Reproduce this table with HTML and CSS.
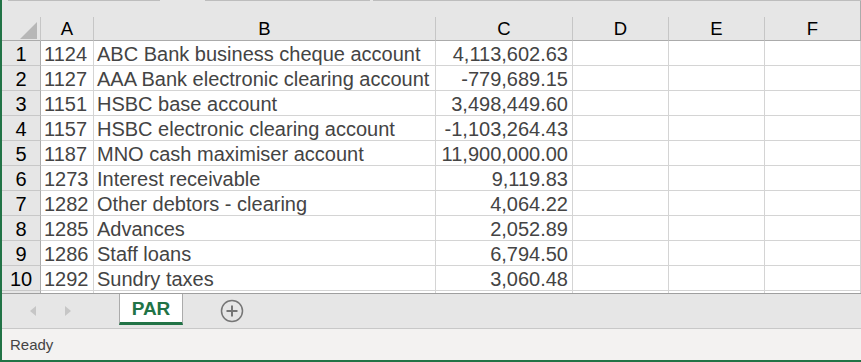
FILE: index.html
```html
<!DOCTYPE html>
<html lang="en">
<head>
  <meta charset="UTF-8" />
  <title>PAR</title>
  <link rel="stylesheet" href="styles.css">
</head>
<body>

<div class="window">
  <div class="topline"></div>

  <div class="grid">
    <table class="sheet">
      <colgroup>
        <col class="c-rowhead">
        <col class="c-a">
        <col class="c-b">
        <col class="c-c">
        <col class="c-d">
        <col class="c-e">
        <col class="c-f">
      </colgroup>
      <thead>
        <tr>
          <th class="corner">
            <svg width="17" height="17" viewBox="0 0 17 17"><polygon points="0,17 17,17 17,0" fill="#b7b7b7"/></svg>
          </th>
          <th>A</th>
          <th>B</th>
          <th>C</th>
          <th>D</th>
          <th>E</th>
          <th class="last">F</th>
        </tr>
      </thead>
      <tbody>
        <tr><td class="rownum">1</td><td>1124</td><td>ABC Bank business cheque account</td><td class="num">4,113,602.63</td><td></td><td></td><td></td></tr>
        <tr><td class="rownum">2</td><td>1127</td><td>AAA Bank electronic clearing account</td><td class="num">-779,689.15</td><td></td><td></td><td></td></tr>
        <tr><td class="rownum">3</td><td>1151</td><td>HSBC base account</td><td class="num">3,498,449.60</td><td></td><td></td><td></td></tr>
        <tr><td class="rownum">4</td><td>1157</td><td>HSBC electronic clearing account</td><td class="num">-1,103,264.43</td><td></td><td></td><td></td></tr>
        <tr><td class="rownum">5</td><td>1187</td><td>MNO cash maximiser account</td><td class="num">11,900,000.00</td><td></td><td></td><td></td></tr>
        <tr><td class="rownum">6</td><td>1273</td><td>Interest receivable</td><td class="num">9,119.83</td><td></td><td></td><td></td></tr>
        <tr><td class="rownum">7</td><td>1282</td><td>Other debtors - clearing</td><td class="num">4,064.22</td><td></td><td></td><td></td></tr>
        <tr><td class="rownum">8</td><td>1285</td><td>Advances</td><td class="num">2,052.89</td><td></td><td></td><td></td></tr>
        <tr><td class="rownum">9</td><td>1286</td><td>Staff loans</td><td class="num">6,794.50</td><td></td><td></td><td></td></tr>
        <tr><td class="rownum">10</td><td>1292</td><td>Sundry taxes</td><td class="num">3,060.48</td><td></td><td></td><td></td></tr>
        <tr><td class="rownum"></td><td></td><td></td><td class="num"></td><td></td><td></td><td></td></tr>
      </tbody>
    </table>
  </div>

  <div class="tabbar">
    <div class="tabnav">
      <svg width="6" height="10" viewBox="0 0 6 10"><polygon points="6,0 6,10 0,5" fill="#c6c6c6"/></svg>
      <svg width="6" height="10" viewBox="0 0 6 10"><polygon points="0,0 0,10 6,5" fill="#c6c6c6"/></svg>
    </div>
    <div class="tab">PAR</div>
    <div class="addsheet">
      <svg width="24" height="24" viewBox="0 0 24 24">
        <circle cx="12" cy="12" r="10.5" fill="none" stroke="#767676" stroke-width="1.5"/>
        <path d="M12 6.5v11M6.5 12h11" stroke="#767676" stroke-width="2"/>
      </svg>
    </div>
  </div>

  <div class="statusbar">Ready</div>
</div>

</body>
</html>
```

FILE: styles.css
```css
body {
  margin: 0;
  font-family: 'Liberation Sans', Arial, sans-serif;
  background: #fff;
}

.window {
  width: 861px;
  height: 362px;
  box-sizing: border-box;
  border-left: 2px solid #217346;
  border-bottom: 2px solid #217346;
  display: flex;
  flex-direction: column;
  overflow: hidden;
}

.topline {
  height: 1px;
  flex: none;
  background: linear-gradient(to right,
    #e6e6e6 0, #e6e6e6 6px,
    #bdbdbd 6px, #bdbdbd 158px,
    #e6e6e6 158px, #e6e6e6 203px,
    #bdbdbd 203px, #bdbdbd 368px,
    #e6e6e6 368px, #e6e6e6 371px,
    #bdbdbd 371px);
}

.grid {
  height: 292px;
  flex: none;
  overflow: hidden;
}

.sheet {
  table-layout: fixed;
  border-collapse: separate;
  border-spacing: 0;
  width: 859px;
}

.c-rowhead { width: 39px; }
.c-a { width: 53px; }
.c-b { width: 342px; }
.c-c { width: 137px; }
.c-d, .c-e, .c-f { width: 96px; }

th {
  height: 39px;
  padding: 16px 0 0;
  box-sizing: border-box;
  line-height: 23px;
  font-size: 18.5px;
  font-weight: normal;
  color: #000;
  text-align: center;
  vertical-align: top;
  border-right: 1px solid transparent;
  border-bottom: 1px solid #ababab;
  background: #e6e6e6 linear-gradient(#c6c6c6, #c6c6c6) no-repeat right bottom / 1px 24px;
  background-origin: border-box;
}

th.last {
  background-size: 1px 100%;
  background-image: linear-gradient(#ababab, #ababab);
}

th.corner {
  padding: 21px 0 0 18px;
  line-height: 0;
  text-align: left;
}

tbody tr {
  height: 25px;
}

td {
  padding: 2px 3px 0;
  line-height: 22px;
  font-size: 20px;
  color: #444;
  white-space: nowrap;
  overflow: hidden;
  border-right: 1px solid #d4d4d4;
  border-bottom: 1px solid #d4d4d4;
}

td.num {
  text-align: right;
  padding-right: 4px;
}

td.rownum {
  padding: 2px 0 0;
  text-align: center;
  color: #000;
  background: #e6e6e6;
  border-right-color: #ababab;
  border-bottom-color: #c8c8c8;
}

.tabbar {
  height: 35px;
  flex: none;
  box-sizing: border-box;
  border-top: 1px solid #9f9f9f;
  background: #e6e6e6;
  display: flex;
  align-items: flex-start;
}

.tabnav {
  width: 117px;
  height: 33px;
  box-sizing: border-box;
  padding-left: 28px;
  display: flex;
  align-items: center;
  gap: 29px;
}

.tab {
  width: 64px;
  height: 31px;
  box-sizing: border-box;
  background: #fff;
  border-left: 1px solid #ababab;
  border-right: 1px solid #ababab;
  border-bottom: 3px solid #217346;
  color: #217346;
  font-weight: bold;
  font-size: 19px;
  line-height: 29px;
  text-align: center;
}

.addsheet {
  margin: 5px 0 0 37px;
  height: 24px;
}

.statusbar {
  flex: 1;
  box-sizing: border-box;
  border-top: 1px solid #c8c8c8;
  background: #f3f2f1;
  padding: 7px 0 0 8px;
  font-size: 15px;
  line-height: 18px;
  color: #444;
}
```
